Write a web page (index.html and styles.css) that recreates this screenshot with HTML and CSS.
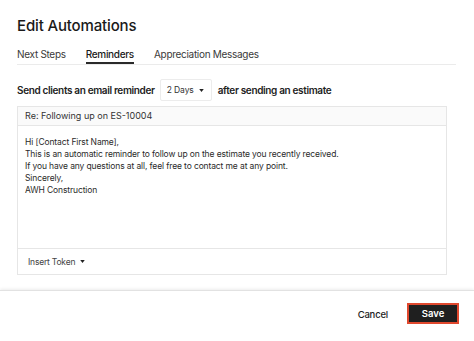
FILE: index.html
```html
<!DOCTYPE html>
<html lang="en">
<head>
<meta charset="utf-8">
<title>Edit Automations</title>
<link rel="stylesheet" href="styles.css">
</head>
<body>
<div class="modal">
  <div class="content">
    <h1 class="title">Edit Automations</h1>
    <nav class="tabs">
      <span class="tab">Next Steps</span>
      <span class="tab active">Reminders</span>
      <span class="tab">Appreciation Messages</span>
    </nav>
    <div class="rule-row">
      <span class="label">Send clients an email reminder</span>
      <span class="select">2 Days <svg class="caret" width="5" height="3" viewBox="0 0 6 4"><path d="M0 0h6L3 4z" fill="#222"/></svg></span>
      <span class="label">after sending an estimate</span>
    </div>
    <div class="editor">
      <div class="subject">Re: Following up on ES-10004</div>
      <div class="body">
        <p>Hi [Contact First Name],</p>
        <p>This is an automatic reminder to follow up on the estimate you recently received.</p>
        <p>If you have any questions at all, feel free to contact me at any point.</p>
        <p>Sincerely,</p>
        <p>AWH Construction</p>
      </div>
      <div class="toolbar">
        <span class="token">Insert Token <svg class="caret" width="5" height="3" viewBox="0 0 6 4"><path d="M0 0h6L3 4z" fill="#222"/></svg></span>
      </div>
    </div>
  </div>
  <footer class="footer">
    <span class="cancel">Cancel</span>
    <span class="save">Save</span>
  </footer>
</div>
</body>
</html>
```
FILE: styles.css
```css
html, body {
  margin: 0;
  padding: 0;
  background: #ffffff;
}
body {
  font-family: Inter, "Noto Sans", "Liberation Sans", sans-serif;
  color: #2a2a2a;
}
.modal {
  width: 474px;
  height: 341px;
  display: flex;
  flex-direction: column;
  overflow: hidden;
}
.content {
  padding: 0 18px 0 17px;
  flex: 1;
}
.title {
  margin: 16px 0 0;
  font-size: 15px;
  line-height: 20px;
  font-weight: 500;
  color: #1a1a1a;
  letter-spacing: -0.15px;
}
.tabs {
  display: flex;
  gap: 20px;
  margin-top: 11px;
  border-bottom: 1px solid #ebebeb;
}
.tab {
  font-size: 10px;
  line-height: 14px;
  letter-spacing: -0.3px;
  color: #3a3a3a;
  padding-bottom: 3px;
}
.tab.active {
  color: #1a1a1a;
  font-weight: 500;
  padding-bottom: 1px;
  border-bottom: 2px solid #2a2a2a;
}
.rule-row {
  display: flex;
  align-items: center;
  gap: 5px;
  margin-top: 14px;
}
.label {
  font-size: 10px;
  font-weight: 600;
  letter-spacing: -0.35px;
  color: #222;
}
.label + .select + .label {
  margin-left: 1px;
}
.select {
  display: inline-flex;
  align-items: center;
  gap: 5px;
  height: 20px;
  padding: 0 7px 0 6px;
  border: 1px solid #ececec;
  border-radius: 2px;
  font-size: 8.5px;
  letter-spacing: -0.1px;
  color: #333;
}
.editor {
  margin: 5px 9px 0 0;
  border: 1px solid #e6e6e6;
}
.subject {
  height: 18px;
  line-height: 18px;
  padding: 0 7px;
  background: #fafafa;
  border-bottom: 1px solid #e6e6e6;
  font-size: 9px;
  color: #333;
}
.body {
  height: 123px;
  padding: 10px 7px 0;
  border-bottom: 1px solid #e6e6e6;
  box-sizing: border-box;
}
.body p {
  margin: 0;
  font-size: 8.5px;
  line-height: 12px;
  letter-spacing: -0.12px;
  color: #2a2a2a;
}
.toolbar {
  height: 25px;
  display: flex;
  align-items: center;
  padding: 0 10px;
}
.token {
  display: inline-flex;
  align-items: center;
  gap: 5px;
  font-size: 8.5px;
  letter-spacing: -0.2px;
  color: #444;
}
.footer {
  height: 51px;
  flex: none;
  display: flex;
  align-items: flex-start;
  justify-content: flex-end;
  gap: 19px;
  padding: 12px 15px 0 0;
  box-sizing: border-box;
  border-top: 1px solid #e2e2e2;
  box-shadow: 0 -1px 3px rgba(0, 0, 0, 0.08);
}
.cancel {
  font-size: 9.5px;
  font-weight: 500;
  letter-spacing: -0.2px;
  color: #222;
  line-height: 23px;
}
.save {
  display: inline-flex;
  align-items: center;
  justify-content: center;
  width: 48px;
  height: 17px;
  background: #1f1f1f;
  border: 2px solid #e0482e;
  color: #fff;
  font-size: 9.5px;
  font-weight: 600;
}
```
